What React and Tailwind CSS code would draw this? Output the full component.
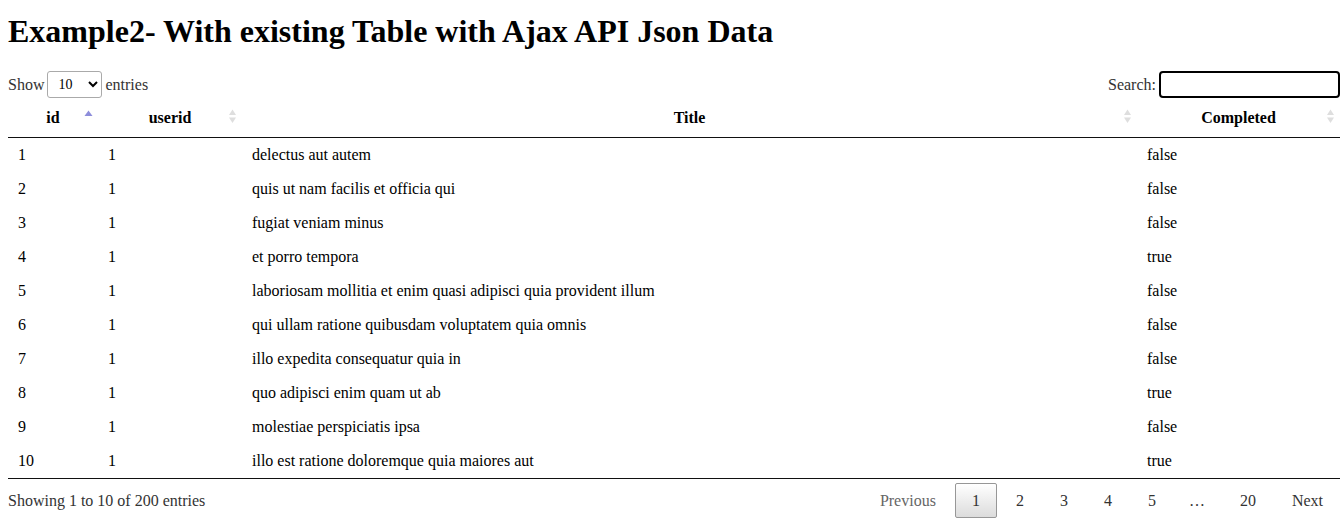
import React from "react";

const rows = [
  [1, 1, "delectus aut autem", "false"],
  [2, 1, "quis ut nam facilis et officia qui", "false"],
  [3, 1, "fugiat veniam minus", "false"],
  [4, 1, "et porro tempora", "true"],
  [5, 1, "laboriosam mollitia et enim quasi adipisci quia provident illum", "false"],
  [6, 1, "qui ullam ratione quibusdam voluptatem quia omnis", "false"],
  [7, 1, "illo expedita consequatur quia in", "false"],
  [8, 1, "quo adipisci enim quam ut ab", "true"],
  [9, 1, "molestiae perspiciatis ipsa", "false"],
  [10, 1, "illo est ratione doloremque quia maiores aut", "true"],
];

function SortIcon({ active }) {
  // both arrows grey, the up one blue when the column is sorted
  if (active) {
    return (
      <svg width="9" height="14" viewBox="0 0 9 14" className="absolute right-[5px] top-[11px]">
        <path d="M4.5 0.5 L8.5 6 L0.5 6 Z" fill="#8d8ddb" />
      </svg>
    );
  }
  return (
    <svg width="9" height="15" viewBox="0 0 9 15" className="absolute right-[5px] top-[10px]">
      <path d="M4.5 0.5 L8 6 L1 6 Z" fill="#dedede" />
      <path d="M4.5 14 L8 8.5 L1 8.5 Z" fill="#dedede" />
    </svg>
  );
}

function Th({ children, active }) {
  return (
    <th className="relative px-[18px] py-[10px] leading-[18px] text-center font-bold border-b border-[#111]">
      {children}
      <SortIcon active={active} />
    </th>
  );
}

const pageBtn = "ml-[2px] min-w-[24px] h-[35px] px-[16px] flex items-center justify-center border border-transparent";

export default function App() {
  return (
    <div className="pl-[8px] pr-[3px] text-[16px] text-black" style={{ fontFamily: '"Liberation Serif", "Times New Roman", serif' }}>
      <h1 className="mt-[13px] h-[36px] leading-[36px] text-[32px] font-bold">
        Example2- With existing Table with Ajax API Json Data
      </h1>

      {/* length + filter */}
      <div className="mt-[21px] h-[29px] flex items-center justify-between text-[#333]">
        <label className="flex items-center gap-[3px]">
          Show
          <select className="w-[55px] h-[27px] border border-[#aaa] rounded-[3px] bg-white text-[14px] text-black pl-[6px]">
            <option>10</option>
          </select>
          entries
        </label>
        <label className="flex items-center gap-[3px]">
          Search:
          <input className="w-[181px] h-[27px] border-2 border-black rounded-[4px] bg-white outline-none" />
        </label>
      </div>

      <table className="w-full border-collapse">
        <colgroup>
          <col className="w-[90px]" />
          <col className="w-[144px]" />
          <col className="w-[895px]" />
          <col />
        </colgroup>
        <thead>
          <tr>
            <Th active>id</Th>
            <Th>userid</Th>
            <Th>Title</Th>
            <Th>Completed</Th>
          </tr>
        </thead>
        <tbody className="border-b border-[#111]">
          {rows.map((r) => (
            <tr key={r[0]}>
              {r.map((c, i) => (
                <td key={i} className="px-[10px] py-[8px] leading-[18px]">{c}</td>
              ))}
            </tr>
          ))}
        </tbody>
      </table>

      {/* info + paging */}
      <div className="flex items-start justify-between text-[#333]">
        <div className="pt-[13px] leading-[18px]">Showing 1 to 10 of 200 entries</div>
        <div className="flex items-center pt-[4px]">
          <span className="px-[16px] h-[35px] flex items-center border border-transparent text-[#666]">Previous</span>
          <span className="ml-[2px] min-w-[24px] h-[35px] px-[16px] flex items-center justify-center border border-[#979797] rounded-[2px] bg-gradient-to-b from-white to-[#dcdcdc]">1</span>
          {["2", "3", "4", "5"].map((p) => (
            <span key={p} className={pageBtn}>{p}</span>
          ))}
          <span className="px-[16px] h-[35px] flex items-center">…</span>
          <span className={pageBtn}>20</span>
          <span className={pageBtn}>Next</span>
        </div>
      </div>
    </div>
  );
}
